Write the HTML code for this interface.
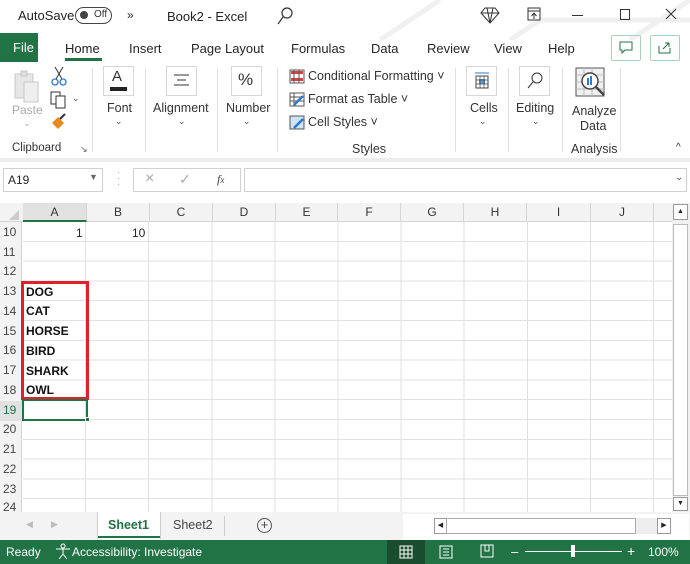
<!DOCTYPE html><html><head><style>
*{box-sizing:border-box;margin:0;padding:0}
body{width:690px;height:564px;position:relative;overflow:hidden;background:#fff;font-family:"Liberation Sans",sans-serif;color:#262626}
.a{position:absolute;white-space:nowrap}
.t{font-size:13px}
.sep{position:absolute;top:68px;width:1px;height:84px;background:#e1e1e1}
.ib{position:absolute;top:66px;width:31px;height:30px;border:1px solid #d6d6d6;background:#fff}
.lbl{font-size:12.5px;color:#333}
.chev{font-size:9px;color:#555}
.col{position:absolute;top:203px;height:19px;font-size:12px;color:#333;text-align:center;line-height:19px;border-right:1px solid #d4d4d4}
.rh{position:absolute;left:0;width:22px;font-size:12px;color:#444;padding-left:3px;line-height:19.8px}
.cell{position:absolute;left:26px;font-size:12px;font-weight:bold;color:#111;line-height:19.8px}
</style></head><body>
<!-- title bar -->
<div class="a t" style="left:18px;top:8px;color:#222">AutoSave</div>
<div class="a" style="left:75px;top:7px;width:37px;height:17px;border:1px solid #444;border-radius:9px"></div>
<div class="a" style="left:80px;top:11px;width:8px;height:8px;border-radius:50%;background:#444"></div>
<div class="a" style="left:94px;top:9px;font-size:10px;color:#333">Off</div>
<div class="a" style="left:127px;top:8px;font-size:12px">»</div>
<div class="a t" style="left:167px;top:9px;color:#222">Book2 - Excel</div>
<svg class="a" style="left:276px;top:6px" width="18" height="20"><circle cx="11" cy="7" r="5" fill="none" stroke="#333" stroke-width="1.2"/><line x1="7" y1="11" x2="2" y2="18" stroke="#333" stroke-width="1.2"/></svg>
<svg class="a" style="left:300px;top:0" width="390" height="40"><path d="M80 40 L140 0 M210 40 L240 20 L390 20 M330 40 L390 0" stroke="#f0f0f0" stroke-width="5" fill="none"/></svg>
<svg class="a" style="left:480px;top:6px" width="20" height="18"><path d="M5 2h10l4 5-9 10L1 7z M1 7h18 M7 2l3 15 3-15" fill="none" stroke="#333" stroke-width="1"/></svg>
<svg class="a" style="left:527px;top:7px" width="14" height="14"><rect x="1" y="1" width="12" height="12" fill="none" stroke="#333"/><path d="M1 4h12 M7 6v6 M4.5 9l2.5-3 2.5 3" fill="none" stroke="#333"/></svg>
<div class="a" style="left:572px;top:15px;width:11px;height:1px;background:#333"></div>
<div class="a" style="left:620px;top:9px;width:10px;height:11px;border:1px solid #333"></div>
<svg class="a" style="left:665px;top:8px" width="12" height="12"><path d="M1 1l10 10M11 1L1 11" stroke="#333"/></svg>
<!-- tabs -->
<div class="a" style="left:0;top:33px;width:38px;height:29px;background:#217346"></div>
<div class="a t" style="left:13px;top:40px;color:#fff">File</div>
<div class="a t" style="left:65px;top:41px;color:#222">Home</div>
<div class="a" style="left:65px;top:58px;width:37px;height:3px;background:#217346"></div>
<div class="a t" style="left:129px;top:41px">Insert</div>
<div class="a t" style="left:191px;top:41px">Page Layout</div>
<div class="a t" style="left:291px;top:41px">Formulas</div>
<div class="a t" style="left:371px;top:41px">Data</div>
<div class="a t" style="left:427px;top:41px">Review</div>
<div class="a t" style="left:494px;top:41px">View</div>
<div class="a t" style="left:548px;top:41px">Help</div>
<div class="a" style="left:611px;top:35px;width:30px;height:26px;border:1px solid #a9d3b7;border-radius:2px"></div>
<svg class="a" style="left:619px;top:41px" width="14" height="13"><path d="M1 1h12v8H6l-3 3V9H1z" fill="none" stroke="#217346"/></svg>
<div class="a" style="left:650px;top:35px;width:30px;height:26px;border:1px solid #a9d3b7;border-radius:2px"></div>
<svg class="a" style="left:658px;top:40px" width="14" height="14"><path d="M1 6v7h11V8 M5 9l6-6 M7 3h4v4" fill="none" stroke="#217346"/></svg>
<!-- ribbon -->
<svg class="a" style="left:12px;top:70px" width="30" height="36"><rect x="3" y="4" width="18" height="24" fill="#e6e6e6" stroke="#c8c8c8"/><rect x="9" y="1" width="6" height="5" fill="#ddd" stroke="#c8c8c8"/><rect x="12" y="12" width="14" height="20" fill="#eee" stroke="#c8c8c8"/></svg>
<div class="a" style="left:12px;top:103px;font-size:12px;color:#aaa">Paste</div>
<div class="a chev" style="left:23px;top:118px;color:#aaa">⌄</div>
<svg class="a" style="left:51px;top:66px" width="16" height="20"><path d="M4 1l7 12 M12 1L5 13" stroke="#333"/><circle cx="4" cy="16" r="3" fill="none" stroke="#2a7ad0" stroke-width="1.3"/><circle cx="12" cy="16" r="3" fill="none" stroke="#2a7ad0" stroke-width="1.3"/></svg>
<svg class="a" style="left:50px;top:91px" width="18" height="18"><rect x="1" y="1" width="9" height="12" fill="#fff" stroke="#333"/><rect x="6" y="5" width="9" height="12" fill="#fff" stroke="#333"/></svg>
<div class="a chev" style="left:72px;top:93px">⌄</div>
<svg class="a" style="left:50px;top:113px" width="18" height="18"><path d="M2 10l6-6 6 6-6 6z" fill="#e88a1a"/><path d="M10 6l5-5" stroke="#333" stroke-width="2"/></svg>
<div class="a lbl" style="left:12px;top:142px;font-size:11.5px">Clipboard</div>
<div class="a" style="left:80px;top:144px;font-size:9px;color:#666">↘</div>
<div class="sep" style="left:92px"></div>
<div class="ib" style="left:103px"></div>
<div class="a" style="left:112px;top:68px;font-size:15px;color:#333">A</div>
<div class="a" style="left:110px;top:87px;width:17px;height:4px;background:#222"></div>
<div class="a lbl" style="left:107px;top:101px">Font</div><div class="a chev" style="left:115px;top:116px">⌄</div>
<div class="sep" style="left:145px"></div>
<div class="ib" style="left:166px"></div>
<svg class="a" style="left:173px;top:73px" width="17" height="16"><path d="M1 2h15M4 7h9M1 12h15" stroke="#333"/></svg>
<div class="a lbl" style="left:153px;top:101px">Alignment</div><div class="a chev" style="left:178px;top:116px">⌄</div>
<div class="sep" style="left:217px"></div>
<div class="ib" style="left:231px"></div>
<div class="a" style="left:238px;top:70px;font-size:17px;color:#333">%</div>
<div class="a lbl" style="left:226px;top:101px">Number</div><div class="a chev" style="left:243px;top:116px">⌄</div>
<div class="sep" style="left:277px"></div>
<svg class="a" style="left:289px;top:69px" width="16" height="15"><rect x="1" y="1" width="14" height="13" fill="#fff" stroke="#555"/><rect x="2" y="2" width="12" height="3" fill="#e04040"/><rect x="2" y="9" width="12" height="3" fill="#e04040"/><path d="M5 1v13M10 1v13" stroke="#555"/></svg>
<div class="a lbl" style="left:308px;top:69px">Conditional Formatting ˅</div>
<svg class="a" style="left:289px;top:92px" width="16" height="15"><rect x="1" y="1" width="14" height="13" fill="#fff" stroke="#555"/><path d="M1 5h14M5 1v13M1 9h14" stroke="#555"/><path d="M5 13l9-9" stroke="#2a7ad0" stroke-width="2.5"/></svg>
<div class="a lbl" style="left:308px;top:92px">Format as Table ˅</div>
<svg class="a" style="left:289px;top:115px" width="16" height="15"><rect x="1" y="1" width="14" height="13" fill="#cfe3f5" stroke="#555"/><path d="M5 13l9-9" stroke="#2a7ad0" stroke-width="2.5"/></svg>
<div class="a lbl" style="left:308px;top:115px">Cell Styles ˅</div>
<div class="a lbl" style="left:352px;top:142px">Styles</div>
<div class="sep" style="left:455px"></div>
<div class="ib" style="left:466px"></div>
<svg class="a" style="left:474px;top:72px" width="16" height="18"><path d="M1 1h14" stroke="#2a7ad0"/><rect x="2" y="4" width="12" height="12" fill="#fff" stroke="#444"/><rect x="5" y="7" width="6" height="5" fill="#5aa0e0"/><path d="M2 8h12M2 12h12M6 4v12M10 4v12" stroke="#444" stroke-width=".7"/></svg>
<div class="a lbl" style="left:470px;top:101px">Cells</div><div class="a chev" style="left:479px;top:116px">⌄</div>
<div class="sep" style="left:508px"></div>
<div class="ib" style="left:519px"></div>
<svg class="a" style="left:527px;top:72px" width="16" height="18"><circle cx="10" cy="6" r="5" fill="none" stroke="#333"/><path d="M6 10l-5 6" stroke="#333"/></svg>
<div class="a lbl" style="left:516px;top:101px">Editing</div><div class="a chev" style="left:532px;top:116px">⌄</div>
<div class="sep" style="left:562px"></div>
<svg class="a" style="left:574px;top:66px" width="34" height="34"><rect x="2" y="2" width="28" height="28" fill="#f0f0f0" stroke="#555"/><path d="M2 9h28M2 16h28M2 23h28M10 2v28M18 2v28" stroke="#bbb"/><circle cx="16" cy="15" r="8" fill="#fff" stroke="#444" stroke-width="1.5"/><rect x="13" y="12" width="2" height="7" fill="#2a7ad0"/><rect x="16" y="10" width="2" height="9" fill="#2a7ad0"/><path d="M22 21l8 8" stroke="#444" stroke-width="2.5"/></svg>
<div class="a lbl" style="left:572px;top:104px">Analyze</div>
<div class="a lbl" style="left:580px;top:119px">Data</div>
<div class="a lbl" style="left:571px;top:142px">Analysis</div>
<div class="sep" style="left:620px"></div>
<div class="a" style="left:676px;top:142px;font-size:10px">^</div>
<div class="a" style="left:0;top:158px;width:690px;height:4px;background:#ececec"></div>
<!-- formula bar -->
<div class="a" style="left:3px;top:168px;width:100px;height:24px;border:1px solid #d0d0d0"></div>
<div class="a" style="left:8px;top:173px;font-size:12px">A19</div>
<div class="a" style="left:89px;top:172px;font-size:9px;color:#666">▼</div>
<div class="a" style="left:117px;top:170px;font-size:10px;color:#aaa;line-height:6px">·<br>·<br>·</div>
<div class="a" style="left:133px;top:168px;width:108px;height:24px;border:1px solid #d0d0d0"></div>
<div class="a" style="left:145px;top:170px;font-size:16px;color:#aaa">×</div>
<div class="a" style="left:179px;top:171px;font-size:14px;color:#aaa">✓</div>
<div class="a" style="left:217px;top:172px;font-size:12px;font-style:italic;font-family:'Liberation Serif',serif;color:#444">f<span style="font-size:9px">x</span></div>
<div class="a" style="left:244px;top:168px;width:443px;height:24px;border:1px solid #d0d0d0"></div>
<div class="a" style="left:675px;top:172px;font-size:10px;color:#555">⌄</div>
<!-- grid -->
<div class="a" style="left:0;top:203px;width:672px;height:19px;background:#f3f3f3;border-bottom:1px solid #d4d4d4"></div>
<div class="a" style="left:0;top:222px;width:22px;height:290px;background:#f3f3f3;border-right:1px solid #d4d4d4"></div>
<div class="a" style="left:23px;top:222px;width:649px;height:290px;background-image:repeating-linear-gradient(to bottom,transparent 0,transparent 18.8px,#e1e1e1 18.8px,#e1e1e1 19.8px),repeating-linear-gradient(to right,transparent 0,transparent 62.1px,#e1e1e1 62.1px,#e1e1e1 63.1px)"></div>
<svg class="a" style="left:8px;top:209px" width="12" height="12"><path d="M11 1v10H1z" fill="#ccc"/></svg>
<div class="col" style="left:23px;width:64px;background:#e1e1e1;border-bottom:2px solid #217346">A</div>
<div class="col" style="left:87px;width:63px">B</div>
<div class="col" style="left:150px;width:63px">C</div>
<div class="col" style="left:213px;width:63px">D</div>
<div class="col" style="left:276px;width:62px">E</div>
<div class="col" style="left:338px;width:63px">F</div>
<div class="col" style="left:401px;width:63px">G</div>
<div class="col" style="left:464px;width:63px">H</div>
<div class="col" style="left:527px;width:64px">I</div>
<div class="col" style="left:591px;width:63px">J</div>
<div class="rh" style="top:223px">10</div><div class="rh" style="top:243px">11</div><div class="rh" style="top:262px">12</div><div class="rh" style="top:282px">13</div><div class="rh" style="top:302px">14</div><div class="rh" style="top:322px">15</div><div class="rh" style="top:341px">16</div><div class="rh" style="top:361px">17</div><div class="rh" style="top:381px">18</div><div class="rh" style="top:401px;background:#e1e1e1;color:#217346;width:22px">19</div><div class="rh" style="top:420px">20</div><div class="rh" style="top:440px">21</div><div class="rh" style="top:460px">22</div><div class="rh" style="top:480px">23</div><div class="rh" style="top:499px;height:13px;overflow:hidden;line-height:17px">24</div>
<div class="a" style="left:76px;top:226px;font-size:12px">1</div>
<div class="a" style="left:132px;top:226px;font-size:12px">10</div>
<div class="cell" style="top:283px">DOG</div><div class="cell" style="top:302px">CAT</div><div class="cell" style="top:322px">HORSE</div><div class="cell" style="top:342px">BIRD</div><div class="cell" style="top:362px">SHARK</div><div class="cell" style="top:381px">OWL</div>
<div class="a" style="left:21px;top:281px;width:68px;height:119px;border:3px solid #e0202a"></div>
<div class="a" style="left:22px;top:399px;width:66px;height:22px;border:2px solid #217346"></div>
<div class="a" style="left:85px;top:417px;width:5px;height:5px;background:#217346;border:1px solid #fff"></div>
<!-- vscroll -->
<div class="a" style="left:672px;top:203px;width:18px;height:309px;background:#f0f0f0"></div>
<div class="a" style="left:673px;top:204px;width:15px;height:16px;border:1px solid #999;background:#fff;font-size:7px;text-align:center;line-height:14px">▲</div>
<div class="a" style="left:673px;top:224px;width:15px;height:272px;border:1px solid #bbb;background:#fff"></div>
<div class="a" style="left:673px;top:497px;width:15px;height:14px;border:1px solid #999;background:#fff;font-size:7px;text-align:center;line-height:12px">▼</div>
<!-- sheet tabs -->
<div class="a" style="left:0;top:512px;width:690px;height:28px;background:#f3f3f3"></div>
<div class="a" style="left:26px;top:519px;font-size:9px;color:#bbb">◀</div>
<div class="a" style="left:51px;top:519px;font-size:9px;color:#bbb">▶</div>
<div class="a" style="left:97px;top:512px;width:64px;height:27px;background:#fff;border-left:1px solid #ccc;border-right:1px solid #ccc"></div>
<div class="a" style="left:108px;top:518px;font-size:12.5px;font-weight:bold;color:#217346">Sheet1</div>
<div class="a" style="left:98px;top:536px;width:62px;height:2px;background:#217346"></div>
<div class="a" style="left:173px;top:518px;font-size:12.5px;color:#444">Sheet2</div>
<div class="a" style="left:224px;top:516px;width:1px;height:20px;background:#ccc"></div>
<div class="a" style="left:257px;top:518px;width:15px;height:15px;border:1px solid #555;border-radius:50%;font-size:13px;line-height:12px;text-align:center;color:#444">+</div>
<div class="a" style="left:403px;top:514px;width:286px;height:26px;background:#fff"></div>
<div class="a" style="left:434px;top:518px;width:13px;height:16px;border:1px solid #999;font-size:7px;line-height:14px;text-align:center">◀</div>
<div class="a" style="left:446px;top:518px;width:190px;height:16px;border:1px solid #aaa"></div>
<div class="a" style="left:636px;top:518px;width:21px;height:16px;background:#eee"></div>
<div class="a" style="left:657px;top:518px;width:14px;height:16px;border:1px solid #999;font-size:7px;line-height:14px;text-align:center">▶</div>
<!-- status bar -->
<div class="a" style="left:0;top:540px;width:690px;height:24px;background:#217346"></div>
<div class="a" style="left:6px;top:545px;font-size:12px;color:#fff">Ready</div>
<svg class="a" style="left:55px;top:543px" width="16" height="17"><circle cx="8" cy="3" r="2" fill="none" stroke="#fff"/><path d="M1 6h14M8 6v5l-4 5M8 11l4 5" stroke="#fff" fill="none"/></svg>
<div class="a" style="left:72px;top:545px;font-size:12px;color:#fff">Accessibility: Investigate</div>
<div class="a" style="left:387px;top:540px;width:38px;height:24px;background:#1a4d2e"></div>
<svg class="a" style="left:399px;top:545px" width="14" height="14"><path d="M1 1h12v12H1zM1 5h12M1 9h12M5 1v12M9 1v12" fill="none" stroke="#fff"/></svg>
<svg class="a" style="left:439px;top:545px" width="14" height="14"><rect x="1" y="1" width="12" height="12" fill="none" stroke="#fff"/><path d="M4 4h6M4 7h6M4 10h6" stroke="#fff"/></svg>
<svg class="a" style="left:480px;top:544px" width="14" height="14"><path d="M1 1h12v12H1zM5 1v6h4V1" fill="none" stroke="#fff"/></svg>
<div class="a" style="left:511px;top:544px;font-size:13px;color:#fff">–</div>
<div class="a" style="left:525px;top:551px;width:97px;height:1px;background:#fff"></div>
<div class="a" style="left:571px;top:545px;width:4px;height:12px;background:#fff"></div>
<div class="a" style="left:627px;top:543px;font-size:14px;color:#fff">+</div>
<div class="a" style="left:648px;top:545px;font-size:12px;color:#fff">100%</div>
</body></html>
